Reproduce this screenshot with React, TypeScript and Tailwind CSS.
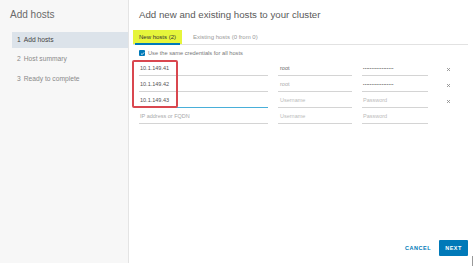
import React from 'react';

type Row = { host: string; user: string; pass: boolean; remove: boolean; active?: boolean };

const rows: Row[] = [
  { host: '10.1.149.41', user: 'root', pass: true, remove: true },
  { host: '10.1.149.42', user: 'root', pass: true, remove: true },
  { host: '10.1.149.43', user: '', pass: false, remove: true, active: true },
  { host: '', user: '', pass: false, remove: false },
];

const steps = ['Add hosts', 'Host summary', 'Ready to complete'];

const App: React.FC = () => {
  return (
    <div className="relative w-[474px] h-[266px] bg-white overflow-hidden font-['Liberation_Sans',Arial,sans-serif]">
      <div className="flex h-[263px]">
        {/* Sidebar */}
        <aside className="w-[129px] shrink-0 bg-[#f7f7f7] border-r border-[#e4e4e4]">
          <h1 className="pl-[10px] pt-[9px] text-[10px] leading-[12px] text-[#6a6a6a] font-light">Add hosts</h1>
          <ul className="mt-[11px] ml-[12px]">
            {steps.map((s, i) => (
              <li
                key={s}
                className={`h-[16px] flex items-center pl-[5px] mb-[3.5px] text-[6.7px] ${
                  i === 0 ? 'bg-[#dce3ea] text-[#444]' : 'text-[#8a8a8a]'
                }`}
              >
                <span className="mr-[3px]">{i + 1}</span> {s}
              </li>
            ))}
          </ul>
        </aside>

        {/* Main */}
        <main className="flex-1 flex flex-col pl-[10px] pr-[12px]">
          <h2 className="pt-[9px] text-[9.7px] leading-[12px] text-[#5a5a5a] font-light">
            Add new and existing hosts to your cluster
          </h2>

          {/* Tabs */}
          <div className="mt-[9px] flex items-end h-[15px] border-b border-[#e2e2e2] -ml-[6px]">
            <div className="relative h-full flex items-center px-[6px] bg-[#e6f53b]">
              <span className="text-[6px] text-[#333]">New hosts (2)</span>
              <span className="absolute left-[2px] right-[2px] -bottom-[1px] h-[2px] bg-[#0079b8]" />
            </div>
            <div className="h-full flex items-center ml-[11px]">
              <span className="text-[6px] text-[#999]">Existing hosts (0 from 0)</span>
            </div>
          </div>

          {/* Checkbox */}
          <label className="mt-[4px] flex items-center gap-[3px] h-[8px]">
            <span className="w-[6px] h-[6px] bg-[#0079b8] rounded-[1px] flex items-center justify-center">
              <svg width="5" height="5" viewBox="0 0 10 10" fill="none">
                <path d="M2 5.2 L4.2 7.3 L8.2 2.8" stroke="white" strokeWidth="1.6" />
              </svg>
            </span>
            <span className="text-[5.7px] text-[#777]">Use the same credentials for all hosts</span>
          </label>

          {/* Rows */}
          <div className="mt-[3px] flex flex-col">
            {rows.map((r, i) => (
              <div key={i} className="flex items-end h-[16px]">
                <div
                  className={`w-[129px] h-[14px] flex items-center pl-[1px] text-[5.5px] border-b ${
                    r.active ? 'border-[#49afd9]' : 'border-[#d4d4d4]'
                  } ${r.host ? 'text-[#555]' : 'text-[#aaa]'}`}
                >
                  {r.host || 'IP address or FQDN'}
                </div>
                <div
                  className={`ml-[10px] w-[74px] h-[14px] flex items-center pl-[2px] text-[5.5px] border-b border-[#d4d4d4] ${
                    r.user ? (i === 0 ? 'text-[#666]' : 'text-[#aaa]') : 'text-[#bbb]'
                  }`}
                >
                  {r.user || 'Username'}
                </div>
                <div className="ml-[10px] w-[66px] h-[14px] flex items-center pl-[1px] text-[5.5px] border-b border-[#d4d4d4] text-[#bbb]">
                  {r.pass ? (
                    <span className="text-[4px] tracking-[0.3px] text-[#666]">••••••••••••••••••</span>
                  ) : (
                    'Password'
                  )}
                </div>
                <div className="w-[40px] h-[14px] flex items-center justify-center">
                  {r.remove && (
                    <svg width="5" height="5" viewBox="0 0 10 10">
                      <path d="M2 2 L8 8 M8 2 L2 8" stroke="#888" strokeWidth="1.6" />
                    </svg>
                  )}
                </div>
              </div>
            ))}
          </div>

          {/* Footer */}
          <div className="mt-auto mb-[7px] flex items-center justify-end gap-[8px]">
            <button className="text-[5.5px] font-bold tracking-[0.5px] text-[#0079b8]">CANCEL</button>
            <button className="w-[29px] h-[16px] bg-[#0079b8] text-white text-[5.5px] font-bold tracking-[0.5px] rounded-[1px]">
              NEXT
            </button>
          </div>
        </main>
      </div>

      {/* annotation around new hosts */}
      <div className="absolute left-[132px] top-[60px] w-[46px] h-[48px] border-2 border-[#d9474f] rounded-[2px]" />
      <div className="absolute right-[1px] bottom-0 w-px h-[10px] bg-[#999]" />
    </div>
  );
};

export default App;
